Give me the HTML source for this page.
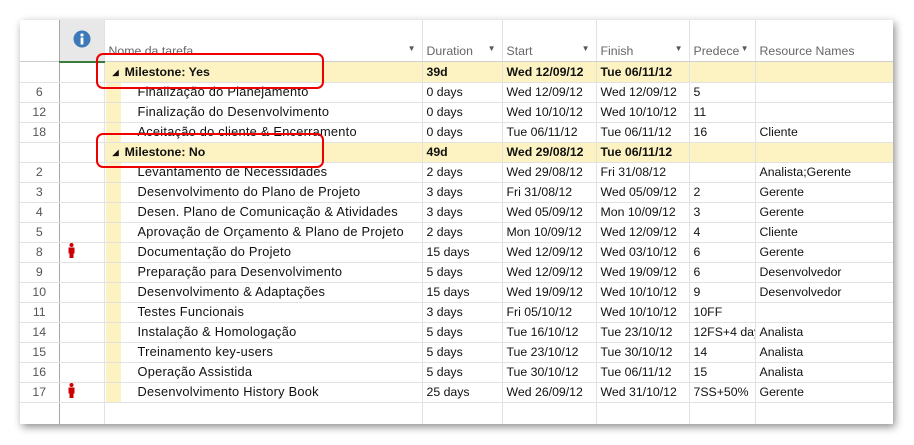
<!DOCTYPE html>
<html><head><meta charset="utf-8"><style>
body{margin:0;width:914px;height:445px;background:#fff;position:relative;overflow:hidden;font-family:"Liberation Sans",sans-serif;}
.panel{position:absolute;left:20px;top:20px;width:873px;height:404px;background:#fff;box-shadow:2px 3px 8px rgba(0,0,0,.45);overflow:hidden}
table{border-collapse:collapse;table-layout:fixed;position:absolute;left:0;top:0;width:873px;font-size:12.3px}
td{height:19px;padding:0 0 0 4px;border-bottom:1px solid #e2e2e2;border-right:1px solid #e2e2e2;white-space:nowrap;overflow:hidden;color:#111}
tr.h td{height:38px;vertical-align:bottom;padding-bottom:3px;color:#666;border-bottom:1px solid #cfcfcf}
td.id{text-align:center;color:#555;padding:0;border-right:1px solid #a8a8a8}
td.ind{padding:0;text-align:center}
tr.h td.ind{background:#e8e8e8;border-bottom:2px solid #3a7a3a;vertical-align:middle;padding:0}
td.nm{padding-left:0}
td.nm .t{font-size:12.8px;letter-spacing:.25px}
.strip{display:inline-block;width:15px;height:19px;background:#fdf3c2;vertical-align:middle;margin-right:17px;margin-left:1px}
tr.g td{background:#fdf3c2;font-weight:bold}
tr.g td.id,tr.g td.ind{background:#fff}
.tri{font-size:8px;margin:0 6px 0 8px;vertical-align:1px}
.dd{float:right;margin-right:6px;font-size:8px;color:#555}
.box{position:absolute;border:2px solid #e00;border-radius:7px}
</style></head><body>
<div class="panel">
<table>
<colgroup><col style="width:39px"><col style="width:45px"><col style="width:318px"><col style="width:80px"><col style="width:94px"><col style="width:93px"><col style="width:66px"><col style="width:138px"></colgroup>
<tr class="h"><td class="id"></td><td class="ind"><svg width="18" height="18" viewBox="0 0 18 18"><circle cx="9" cy="9" r="8.5" fill="#3d78b8"/><circle cx="9" cy="5" r="1.6" fill="#fff"/><rect x="7.6" y="7.5" width="2.8" height="7" fill="#fff"/></svg></td><td>Nome da tarefa<span class="dd">▼</span></td><td>Duration<span class="dd">▼</span></td><td>Start<span class="dd">▼</span></td><td>Finish<span class="dd">▼</span></td><td>Predece<span class="dd">▼</span></td><td>Resource Names</td></tr>
<tr class="g"><td class="id"></td><td class="ind"></td><td class="nm"><span class="tri">◢</span>Milestone: Yes</td><td>39d</td><td>Wed 12/09/12</td><td>Tue 06/11/12</td><td></td><td></td></tr>
<tr><td class="id">6</td><td class="ind"></td><td class="nm"><span class="strip"></span><span class="t">Finalização do Planejamento</span></td><td>0 days</td><td>Wed 12/09/12</td><td>Wed 12/09/12</td><td>5</td><td></td></tr>
<tr><td class="id">12</td><td class="ind"></td><td class="nm"><span class="strip"></span><span class="t">Finalização do Desenvolvimento</span></td><td>0 days</td><td>Wed 10/10/12</td><td>Wed 10/10/12</td><td>11</td><td></td></tr>
<tr><td class="id">18</td><td class="ind"></td><td class="nm"><span class="strip"></span><span class="t">Aceitação do cliente &amp; Encerramento</span></td><td>0 days</td><td>Tue 06/11/12</td><td>Tue 06/11/12</td><td>16</td><td>Cliente</td></tr>
<tr class="g"><td class="id"></td><td class="ind"></td><td class="nm"><span class="tri">◢</span>Milestone: No</td><td>49d</td><td>Wed 29/08/12</td><td>Tue 06/11/12</td><td></td><td></td></tr>
<tr><td class="id">2</td><td class="ind"></td><td class="nm"><span class="strip"></span><span class="t">Levantamento de Necessidades</span></td><td>2 days</td><td>Wed 29/08/12</td><td>Fri 31/08/12</td><td></td><td>Analista;Gerente</td></tr>
<tr><td class="id">3</td><td class="ind"></td><td class="nm"><span class="strip"></span><span class="t">Desenvolvimento do Plano de Projeto</span></td><td>3 days</td><td>Fri 31/08/12</td><td>Wed 05/09/12</td><td>2</td><td>Gerente</td></tr>
<tr><td class="id">4</td><td class="ind"></td><td class="nm"><span class="strip"></span><span class="t">Desen. Plano de Comunicação &amp; Atividades</span></td><td>3 days</td><td>Wed 05/09/12</td><td>Mon 10/09/12</td><td>3</td><td>Gerente</td></tr>
<tr><td class="id">5</td><td class="ind"></td><td class="nm"><span class="strip"></span><span class="t">Aprovação de Orçamento &amp; Plano de Projeto</span></td><td>2 days</td><td>Mon 10/09/12</td><td>Wed 12/09/12</td><td>4</td><td>Cliente</td></tr>
<tr><td class="id">8</td><td class="ind" style="text-align:left;padding-left:8px"><svg width="7" height="15" viewBox="0 0 7 15"><circle cx="3.5" cy="2" r="2" fill="#c00"/><rect x="0.5" y="4.5" width="6" height="6" fill="#c00"/><rect x="1.5" y="10" width="4" height="5" fill="#c00"/></svg></td><td class="nm"><span class="strip"></span><span class="t">Documentação do Projeto</span></td><td>15 days</td><td>Wed 12/09/12</td><td>Wed 03/10/12</td><td>6</td><td>Gerente</td></tr>
<tr><td class="id">9</td><td class="ind"></td><td class="nm"><span class="strip"></span><span class="t">Preparação para Desenvolvimento</span></td><td>5 days</td><td>Wed 12/09/12</td><td>Wed 19/09/12</td><td>6</td><td>Desenvolvedor</td></tr>
<tr><td class="id">10</td><td class="ind"></td><td class="nm"><span class="strip"></span><span class="t">Desenvolvimento &amp; Adaptações</span></td><td>15 days</td><td>Wed 19/09/12</td><td>Wed 10/10/12</td><td>9</td><td>Desenvolvedor</td></tr>
<tr><td class="id">11</td><td class="ind"></td><td class="nm"><span class="strip"></span><span class="t">Testes Funcionais</span></td><td>3 days</td><td>Fri 05/10/12</td><td>Wed 10/10/12</td><td>10FF</td><td></td></tr>
<tr><td class="id">14</td><td class="ind"></td><td class="nm"><span class="strip"></span><span class="t">Instalação &amp; Homologação</span></td><td>5 days</td><td>Tue 16/10/12</td><td>Tue 23/10/12</td><td>12FS+4 day</td><td>Analista</td></tr>
<tr><td class="id">15</td><td class="ind"></td><td class="nm"><span class="strip"></span><span class="t">Treinamento key-users</span></td><td>5 days</td><td>Tue 23/10/12</td><td>Tue 30/10/12</td><td>14</td><td>Analista</td></tr>
<tr><td class="id">16</td><td class="ind"></td><td class="nm"><span class="strip"></span><span class="t">Operação Assistida</span></td><td>5 days</td><td>Tue 30/10/12</td><td>Tue 06/11/12</td><td>15</td><td>Analista</td></tr>
<tr><td class="id">17</td><td class="ind" style="text-align:left;padding-left:8px"><svg width="7" height="15" viewBox="0 0 7 15"><circle cx="3.5" cy="2" r="2" fill="#c00"/><rect x="0.5" y="4.5" width="6" height="6" fill="#c00"/><rect x="1.5" y="10" width="4" height="5" fill="#c00"/></svg></td><td class="nm"><span class="strip"></span><span class="t">Desenvolvimento History Book</span></td><td>25 days</td><td>Wed 26/09/12</td><td>Wed 31/10/12</td><td>7SS+50%</td><td>Gerente</td></tr>
<tr><td class="id" style="height:22px"></td><td class="ind"></td><td></td><td></td><td></td><td></td><td></td><td></td></tr>
</table>
</div>
<div class="box" style="left:96px;top:53px;width:224px;height:32px"></div>
<div class="box" style="left:96px;top:133px;width:224px;height:31px"></div>
</body></html>
